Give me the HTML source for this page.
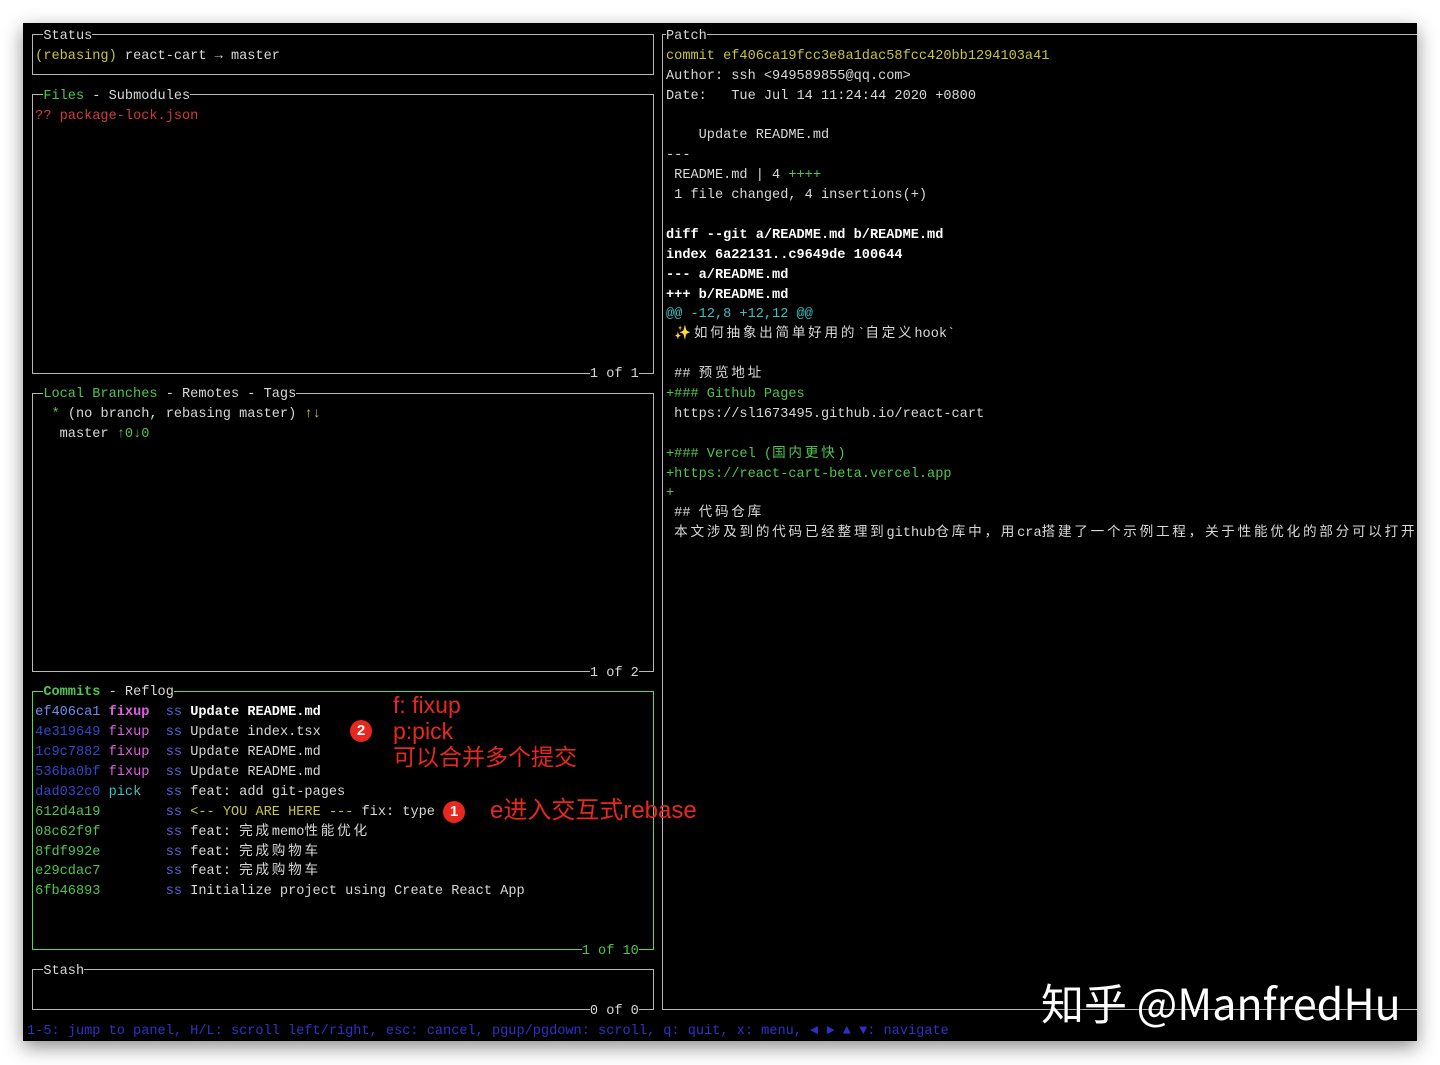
<!DOCTYPE html>
<html><head><meta charset="utf-8"><style>
html,body{margin:0;padding:0;background:#fff;width:1440px;height:1065px;overflow:hidden}
#win{position:absolute;left:23px;top:23px;width:1394px;height:1018px;background:#000;overflow:hidden;box-shadow:0 6px 18px rgba(0,0,0,.45)}
.p{position:absolute;font-family:"Liberation Mono","Noto Sans CJK SC",monospace;font-size:13.6px;line-height:19.9px;color:#d8d8d8;white-space:normal;width:1400px}
.p>div{height:19.9px;overflow:visible;white-space:pre}
.b{position:absolute;border:1px solid #b8b8b8}
.g{border-color:#5ad65a}
.t{background:#000}
.c{font-family:"Noto Sans CJK SC",sans-serif;letter-spacing:2.74px;line-height:1}
.y{color:#c8c43c}.gr{color:#4ec64e}.r{color:#d23a3a}.cy{color:#3cc0c0}.m{color:#e060e0}.bl{color:#3446cc}.bl2{color:#6f8cf2}.ss{color:#6060d8}.w{color:#fff;font-weight:bold}.db{color:#3030c8}
.ann{position:absolute;color:#e8281e;font-family:"Liberation Sans","Noto Sans CJK SC",sans-serif;font-size:23px;line-height:26px}
.dot{position:absolute;width:22px;height:22px;border-radius:50%;background:#e8281e;color:#fff;font:bold 15px/22px "Liberation Sans",sans-serif;text-align:center}
</style></head><body>
<div id="win">
<div class="b" style="left:9px;top:11px;width:620px;height:39px"></div>
<div class="b" style="left:9px;top:71px;width:620px;height:278px"></div>
<div class="b" style="left:9px;top:370px;width:620px;height:277px"></div>
<div class="b g" style="left:9px;top:668px;width:620px;height:257px"></div>
<div class="b" style="left:9px;top:946px;width:620px;height:39px"></div>
<div class="b" style="left:639px;top:11px;width:800px;height:974px"></div>
<div class="p" style="left:4px;top:4px">
<div>  <span class="t">Status</span></div>
<div> <span class="y">(rebasing)</span> react-cart → master</div>
<div></div>
<div>  <span class="t"><span class="gr">Files</span> - Submodules</span></div>
<div> <span class="r">?? package-lock.json</span></div>
<div></div><div></div><div></div><div></div><div></div><div></div><div></div><div></div><div></div><div></div><div></div><div></div>
<div>                                                                     <span class="t">1 of 1</span></div>
<div>  <span class="t"><span class="gr">Local Branches</span> - Remotes - Tags</span></div>
<div> <span class="gr">  *</span> (no branch, rebasing master) <span class="y">↑↓</span></div>
<div>    master <span class="gr">↑0↓0</span></div>
<div></div><div></div><div></div><div></div><div></div><div></div><div></div><div></div><div></div><div></div><div></div>
<div>                                                                     <span class="t">1 of 2</span></div>
<div>  <span class="t"><span class="gr" style="font-weight:bold">Commits</span> - Reflog</span></div>
<div> <span class="bl2">ef406ca1</span> <span class="m" style="font-weight:bold">fixup</span>  <span class="ss">ss</span> <span class="w">Update README.md</span></div>
<div> <span class="bl">4e319649</span> <span class="m">fixup</span>  <span class="ss">ss</span> Update index.tsx</div>
<div> <span class="bl">1c9c7882</span> <span class="m">fixup</span>  <span class="ss">ss</span> Update README.md</div>
<div> <span class="bl">536ba0bf</span> <span class="m">fixup</span>  <span class="ss">ss</span> Update README.md</div>
<div> <span class="bl">dad032c0</span> <span class="cy">pick</span>   <span class="ss">ss</span> feat: add git-pages</div>
<div> <span class="gr">612d4a19</span>        <span class="ss">ss</span> <span class="y">&lt;-- YOU ARE HERE ---</span> fix: type</div>
<div> <span class="gr">08c62f9f</span>        <span class="ss">ss</span> feat: <span class="c">完成</span>memo<span class="c">性能优化</span></div>
<div> <span class="gr">8fdf992e</span>        <span class="ss">ss</span> feat: <span class="c">完成购物车</span></div>
<div> <span class="gr">e29cdac7</span>        <span class="ss">ss</span> feat: <span class="c">完成购物车</span></div>
<div> <span class="gr">6fb46893</span>        <span class="ss">ss</span> Initialize project using Create React App</div>
<div></div><div></div>
<div>                                                                    <span class="t gr">1 of 10</span></div>
<div>  <span class="t">Stash</span></div>
<div></div>
<div>                                                                     <span class="t">0 of 0</span></div>
<div><span class="db">1-5: jump to panel, H/L: scroll left/right, esc: cancel, pgup/pgdown: scroll, q: quit, x: menu, ◄ ► ▲ ▼: navigate</span></div>
</div>
<div class="p" style="left:643px;top:4px">
<div><span class="t">Patch</span></div>
<div><span class="y">commit ef406ca19fcc3e8a1dac58fcc420bb1294103a41</span></div>
<div>Author: ssh &lt;949589855@qq.com&gt;</div>
<div>Date:   Tue Jul 14 11:24:44 2020 +0800</div>
<div></div>
<div>    Update README.md</div>
<div>---</div>
<div> README.md | 4 <span class="gr">++++</span></div>
<div> 1 file changed, 4 insertions(+)</div>
<div></div>
<div><b style="color:#fff">diff --git a/README.md b/README.md</b></div>
<div><b style="color:#fff">index 6a22131..c9649de 100644</b></div>
<div><b style="color:#fff">--- a/README.md</b></div>
<div><b style="color:#fff">+++ b/README.md</b></div>
<div><span class="cy">@@ -12,8 +12,12 @@</span></div>
<div> <span class="c">✨如何抽象出简单好用的</span>`<span class="c">自定义</span>hook`</div>
<div></div>
<div> ## <span class="c">预览地址</span></div>
<div><span class="gr">+### Github Pages</span></div>
<div> https://sl1673495.github.io/react-cart</div>
<div></div>
<div><span class="gr">+### Vercel (<span class="c">国内更快</span>)</span></div>
<div><span class="gr">+https://react-cart-beta.vercel.app</span></div>
<div><span class="gr">+</span></div>
<div> ## <span class="c">代码仓库</span></div>
<div> <span class="c">本文涉及到的代码已经整理到</span>github<span class="c">仓库中，用</span>cra<span class="c">搭建了一个示例工程，关于性能优化的部分可以打开</span></div>
</div>
</div>
<div class="ann" style="left:393px;top:692px">f: fixup</div>
<div class="ann" style="left:393px;top:718px">p:pick</div>
<div class="ann" style="left:393px;top:744px">可以合并多个提交</div>
<div class="dot" style="left:350px;top:720px">2</div>
<div class="dot" style="left:443px;top:801px">1</div>
<div class="ann" style="left:490px;top:798px;font-size:24px">e进入交互式rebase</div>
<div style="position:absolute;left:1041px;top:977px;color:#fff;font:43px/50px 'Noto Sans CJK SC','Liberation Sans',sans-serif;text-shadow:0 0 3px rgba(0,0,0,.6)">知乎 @ManfredHu</div>
</body></html>
